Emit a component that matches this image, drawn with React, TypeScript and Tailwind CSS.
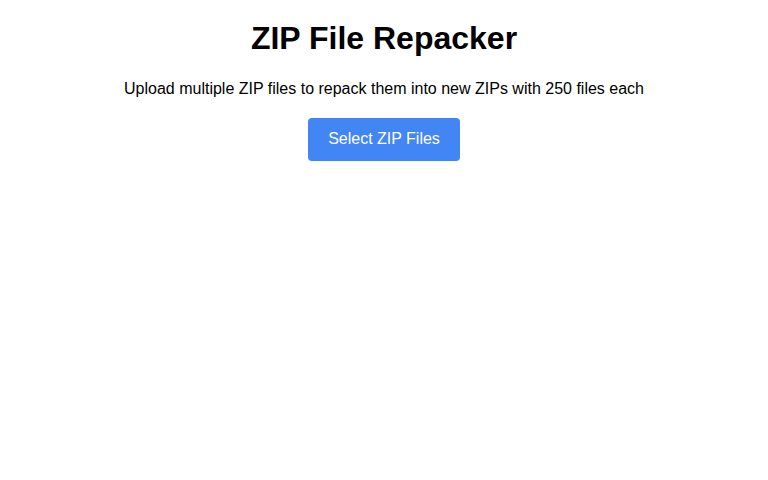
import React from "react";

const App = () => {
  return (
    <div className="min-h-screen bg-white font-['Liberation_Sans',Arial,sans-serif] text-black">
      <main className="flex flex-col items-center pt-[20px]">
        <h1 className="text-[32px] font-bold leading-[1.15]">ZIP File Repacker</h1>
        <p className="mt-[23px] text-base leading-[1.15]">
          Upload multiple ZIP files to repack them into new ZIPs with 250 files each
        </p>
        <label className="mt-[20px] cursor-pointer rounded bg-[#4285f4] px-5 py-3 text-base leading-[1.15] text-white">
          Select ZIP Files
          <input type="file" accept=".zip" multiple className="hidden" />
        </label>
      </main>
    </div>
  );
};

export default App;
